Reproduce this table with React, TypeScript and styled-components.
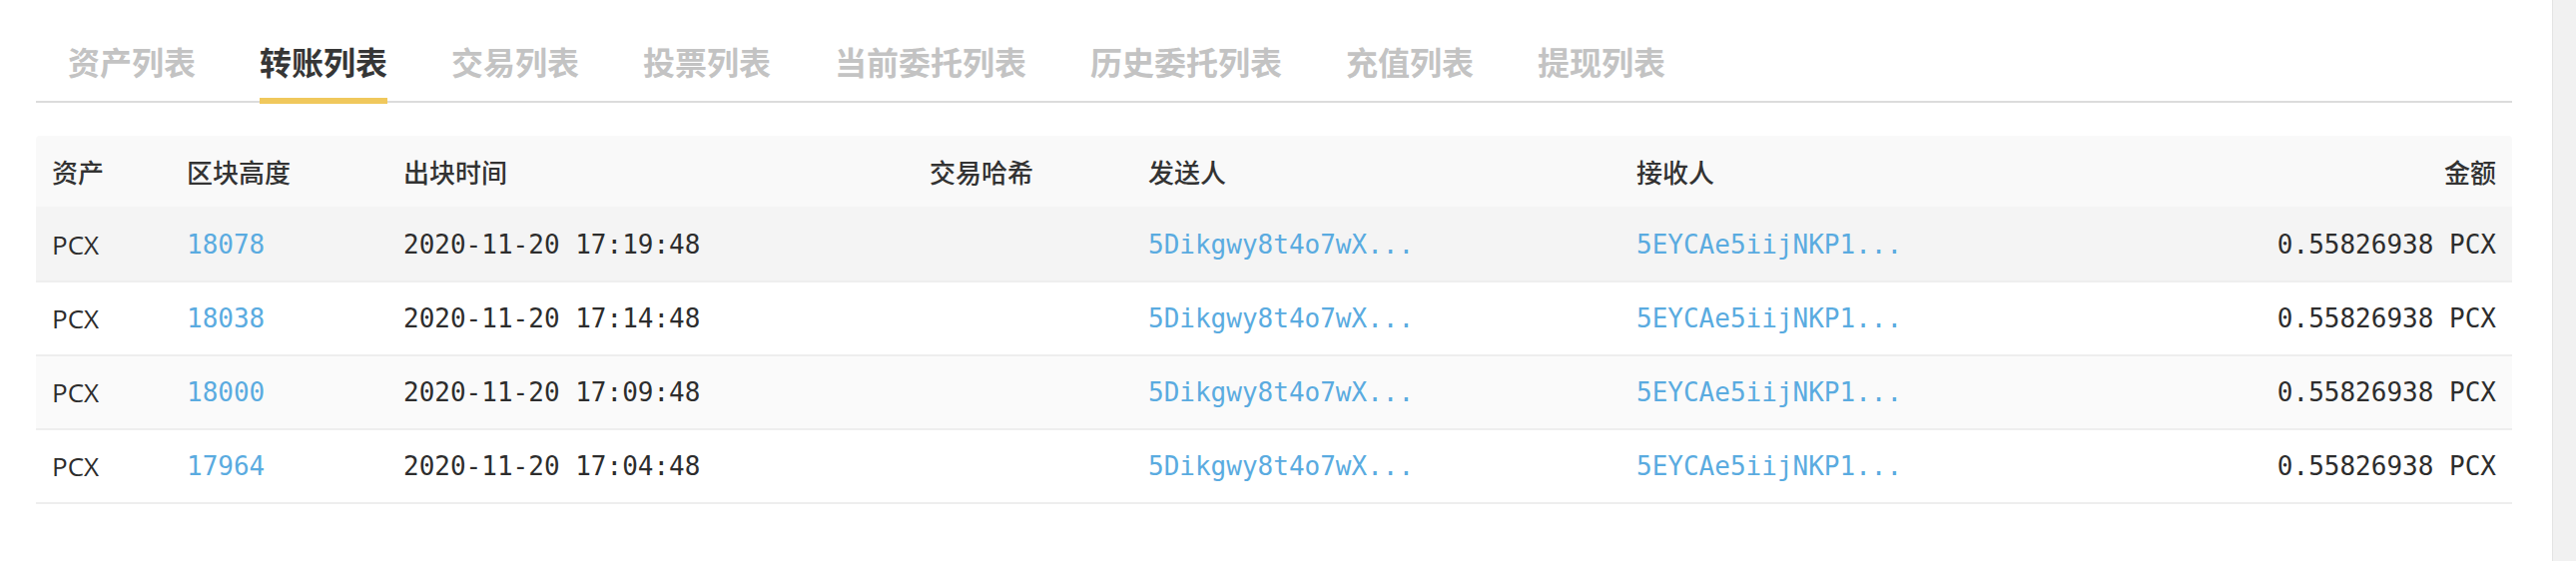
import React, { FunctionComponent } from "react";
import styled, { createGlobalStyle } from "styled-components";

interface Transfer {
  token: string;
  height: number;
  time: string;
  hash: string;
  sender: string;
  receiver: string;
  amount: string;
}

type RowTone = "hover" | "stripe" | "plain";

const tabs = [
  "资产列表",
  "转账列表",
  "交易列表",
  "投票列表",
  "当前委托列表",
  "历史委托列表",
  "充值列表",
  "提现列表"
];

const transfers: Transfer[] = [
  { token: "PCX", height: 18078, time: "2020-11-20 17:19:48", hash: "", sender: "5Dikgwy8t4o7wX...", receiver: "5EYCAe5iijNKP1...", amount: "0.55826938 PCX" },
  { token: "PCX", height: 18038, time: "2020-11-20 17:14:48", hash: "", sender: "5Dikgwy8t4o7wX...", receiver: "5EYCAe5iijNKP1...", amount: "0.55826938 PCX" },
  { token: "PCX", height: 18000, time: "2020-11-20 17:09:48", hash: "", sender: "5Dikgwy8t4o7wX...", receiver: "5EYCAe5iijNKP1...", amount: "0.55826938 PCX" },
  { token: "PCX", height: 17964, time: "2020-11-20 17:04:48", hash: "", sender: "5Dikgwy8t4o7wX...", receiver: "5EYCAe5iijNKP1...", amount: "0.55826938 PCX" }
];

// widths of the columns, left to right; the last one takes the rest
const columns = [135, 217, 527, 219, 489, 600];

const toneOf = (i: number): RowTone => (i === 0 ? "hover" : i % 2 === 0 ? "stripe" : "plain");

const App: FunctionComponent = () => {
  return (
    <>
      <GlobalStyle />
      <Shell>
        <Main>
          <TabBar>
            {tabs.map(name => (
              <Tab key={name} $active={name === "转账列表"}>
                {name}
              </Tab>
            ))}
          </TabBar>
          <Table>
            <colgroup>
              {columns.map((w, i) => (
                <col key={i} style={{ width: w }} />
              ))}
              <col />
            </colgroup>
            <thead>
              <tr>
                <HeadCell>资产</HeadCell>
                <HeadCell>区块高度</HeadCell>
                <HeadCell>出块时间</HeadCell>
                <HeadCell>交易哈希</HeadCell>
                <HeadCell>发送人</HeadCell>
                <HeadCell>接收人</HeadCell>
                <HeadCell $right>金额</HeadCell>
              </tr>
            </thead>
            <tbody>
              {transfers.map((item, i) => (
                <Row key={item.height} $tone={toneOf(i)}>
                  <Cell>{item.token}</Cell>
                  <Cell $mono>
                    <Link href="#">{item.height}</Link>
                  </Cell>
                  <Cell $mono>{item.time}</Cell>
                  <Cell $mono>{item.hash}</Cell>
                  <Cell $mono>
                    <Link href="#">{item.sender}</Link>
                  </Cell>
                  <Cell $mono>
                    <Link href="#">{item.receiver}</Link>
                  </Cell>
                  <Cell $mono $right>
                    {item.amount}
                  </Cell>
                </Row>
              ))}
            </tbody>
          </Table>
        </Main>
        <ScrollTrack />
      </Shell>
    </>
  );
};

const GlobalStyle = createGlobalStyle`
  html, body {
    margin: 0;
    padding: 0;
    background: #fff;
    overflow: hidden;
  }
  body {
    font-family: "Noto Sans", "Noto Sans CJK SC", sans-serif;
    color: #333;
  }
`;

const Shell = styled.div`
  display: flex;
  height: 562px;
`;

const Main = styled.div`
  flex: 1;
  min-width: 0;
  padding: 39px 40px 0 36px;
`;

const ScrollTrack = styled.div`
  width: 23px;
  background: #f1f1f1;
  border-left: 1px solid #e4e4e4;
`;

const TabBar = styled.nav`
  display: flex;
  gap: 64px;
  padding-left: 32px;
  border-bottom: 2px solid #dcdcdc;
`;

const Tab = styled.div<{ $active?: boolean }>`
  font-family: "Noto Sans CJK SC", "Noto Sans", sans-serif;
  font-size: 32px;
  font-weight: 700;
  line-height: 44px;
  padding-bottom: 15px;
  margin-bottom: -3px;
  white-space: nowrap;
  color: ${props => (props.$active ? "#363636" : "#c3c3c3")};
  border-bottom: 6px solid ${props => (props.$active ? "#f0c85c" : "transparent")};
`;

const Table = styled.table`
  width: 100%;
  margin-top: 33px;
  table-layout: fixed;
  border-collapse: separate;
  border-spacing: 0;
  font-size: 26px;
`;

const HeadCell = styled.th<{ $right?: boolean }>`
  height: 71px;
  padding: 0 16px;
  background: #f9f9f9;
  border-bottom: 2px solid #f4f4f4;
  font-family: "Noto Sans CJK SC", "Noto Sans", sans-serif;
  font-weight: 500;
  color: #333;
  text-align: ${props => (props.$right ? "right" : "left")};
  white-space: nowrap;

  &:first-child {
    border-top-left-radius: 4px;
  }
  &:last-child {
    border-top-right-radius: 4px;
  }
`;

const Row = styled.tr<{ $tone: RowTone }>`
  background: ${props =>
    props.$tone === "hover" ? "#f4f4f4" : props.$tone === "stripe" ? "#fafafa" : "#fff"};
`;

const Cell = styled.td<{ $mono?: boolean; $right?: boolean }>`
  height: 72px;
  padding: 0 16px;
  border-bottom: 2px solid #eeeeee;
  font-family: ${props =>
    props.$mono ? `"DejaVu Sans Mono", "Liberation Mono", monospace` : `"Open Sans", "Noto Sans", sans-serif`};
  color: #2d2d2d;
  text-align: ${props => (props.$right ? "right" : "left")};
  white-space: nowrap;
  overflow: hidden;
`;

const Link = styled.a`
  color: #5aabe0;
  text-decoration: none;
`;

export default App;
